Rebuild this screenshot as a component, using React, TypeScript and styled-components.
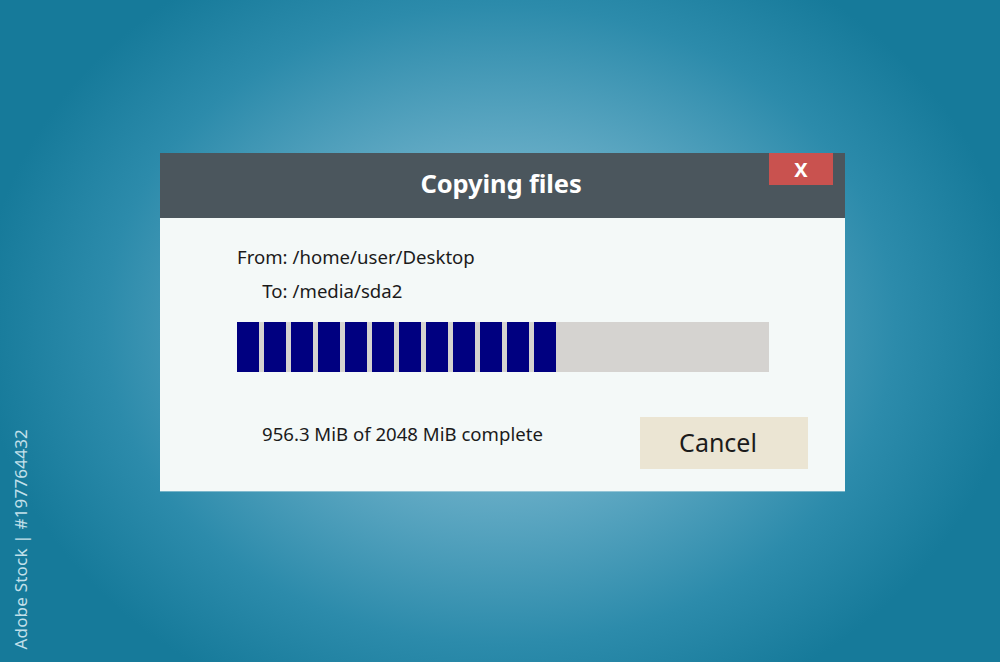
import React from "react";
import styled, { createGlobalStyle } from "styled-components";

const GlobalStyle = createGlobalStyle`
  html, body {
    margin: 0;
    padding: 0;
  }
  body {
    font-family: "Noto Sans", "Open Sans", "DejaVu Sans", sans-serif;
    color: #1b1b1b;
  }
`;

const Desktop = styled.div`
  position: relative;
  width: 1000px;
  height: 662px;
  overflow: hidden;
  box-sizing: border-box;
  padding: 153px 0 0 160px;
  background: radial-gradient(
    ellipse 520px 420px at 50% 49%,
    #8ec5d8 0%,
    #64abc5 40%,
    #2c8bab 76%,
    #167a9a 100%
  );
`;

const Dialog = styled.div`
  width: 685px;
  background: #f4f9f8;
  box-shadow: 0 1px 0 rgba(255, 255, 255, 0.35);
`;

const TitleBar = styled.div`
  position: relative;
  height: 65px;
  background: #4b565d;
  display: flex;
  align-items: center;
  justify-content: center;
`;

const Title = styled.h1`
  margin: 0 3px 5px 0;
  font-size: 25.5px;
  font-weight: 700;
  color: #ffffff;
  letter-spacing: -0.1px;
`;

const CloseButton = styled.button`
  position: absolute;
  top: 0;
  right: 12px;
  width: 64px;
  height: 32px;
  border: none;
  padding: 0;
  background: #c9524f;
  color: #ffffff;
  font-family: inherit;
  font-size: 20px;
  font-weight: 700;
  cursor: pointer;
`;

const Body = styled.div`
  padding: 22px 37px 22px 77px;
`;

const PathGrid = styled.div`
  display: grid;
  grid-template-columns: auto 1fr;
  column-gap: 5px;
  font-size: 18.6px;
  line-height: 34px;
`;

const PathLabel = styled.span`
  text-align: right;
`;

const ProgressTrack = styled.div`
  margin-top: 14px;
  width: 532px;
  height: 50px;
  background: #d5d3d0;
  display: flex;
  gap: 5px;
`;

const Segment = styled.div`
  width: 22px;
  height: 100%;
  background: #000080;
`;

const Footer = styled.div`
  margin-top: 45px;
  display: flex;
  align-items: flex-start;
  justify-content: space-between;
`;

const Status = styled.span`
  margin-left: 25px;
  font-size: 18.6px;
  line-height: 34px;
`;

const CancelButton = styled.button`
  width: 168px;
  height: 52px;
  border: none;
  padding: 0 12px 2px 0;
  background: #ebe5d3;
  color: #1b1b1b;
  font-family: inherit;
  font-size: 25px;
  cursor: pointer;
`;

const StockLabel = styled.div`
  position: absolute;
  left: 9px;
  bottom: 12px;
  writing-mode: vertical-rl;
  transform: rotate(180deg);
  font-size: 17px;
  color: #c2e0ea;
  letter-spacing: 0.2px;
`;

const copied = 956.3;
const total = 2048;
const segmentCount = 12;

export default function App() {
  return (
    <>
      <GlobalStyle />
      <Desktop>
        <Dialog>
          <TitleBar>
            <Title>Copying files</Title>
            <CloseButton>X</CloseButton>
          </TitleBar>
          <Body>
            <PathGrid>
              <PathLabel>From:</PathLabel>
              <span>/home/user/Desktop</span>
              <PathLabel>To:</PathLabel>
              <span>/media/sda2</span>
            </PathGrid>
            <ProgressTrack>
              {Array.from({ length: segmentCount }, (_, i) => (
                <Segment key={i} />
              ))}
            </ProgressTrack>
            <Footer>
              <Status>
                {copied} MiB of {total} MiB complete
              </Status>
              <CancelButton>Cancel</CancelButton>
            </Footer>
          </Body>
        </Dialog>
        <StockLabel>Adobe Stock | #197764432</StockLabel>
      </Desktop>
    </>
  );
}
